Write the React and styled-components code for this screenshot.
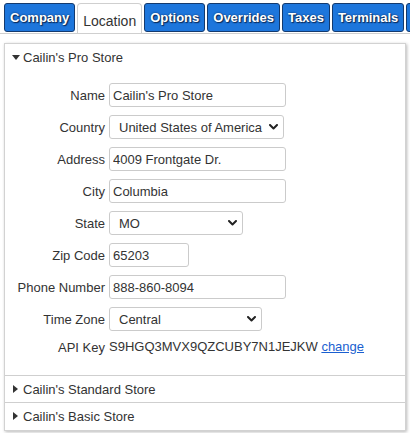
import React from "react";
import styled, { createGlobalStyle } from "styled-components";

const Global = createGlobalStyle`
  html, body { margin: 0; padding: 0; background: #fff; }
  body { font-family: "Liberation Sans", Arial, sans-serif; font-size: 13px; color: #333; }
  * { box-sizing: border-box; }
`;

const Page = styled.div`
  width: 410px;
  height: 433px;
  overflow: hidden;
`;

const TabBar = styled.div`
  display: flex;
  align-items: flex-start;
  gap: 2px;
  height: 34px;
  padding: 3px 0 0 4px;
  border-bottom: 1px solid #cfcfcf;
  overflow: hidden;
`;

const BlueTab = styled.div`
  flex-shrink: 0;
  min-width: ${(p) => p.$minW || 0}px;
  height: 29px;
  line-height: 27px;
  padding: 0 5px;
  background: #1d76dc;
  border: 1px solid #143a6e;
  border-radius: 3px;
  color: #fff;
  font-weight: bold;
  font-size: 13px;
  text-shadow: 0 0 2px #0b2a57, 1px 1px 1px #0b2a57;
  white-space: nowrap;
`;

const ActiveTab = styled.div`
  flex-shrink: 0;
  height: 30px;
  padding: 9px 5px 0;
  background: #fff;
  border: 1px solid #cfcfcf;
  border-bottom: none;
  border-radius: 4px 4px 0 0;
  color: #333;
  font-size: 14px;
  line-height: 16px;
  white-space: nowrap;
`;

const Panel = styled.div`
  margin: 9px 4px 0;
  height: 388px;
  border: 1px solid #d2d2d2;
  box-shadow: 1px 1px 3px rgba(0, 0, 0, 0.28);
  background: #fff;
`;

const Section = styled.div`
  border-top: ${(p) => (p.$first ? "none" : "1px solid #cfcfcf")};
`;

const Header = styled.div`
  display: flex;
  align-items: center;
  height: 26px;
  padding-left: 7px;
  color: #333;
  font-size: 13px;
`;

const Caret = styled.span`
  display: flex;
  align-items: center;
  width: 11px;
  height: 26px;
  &::before {
    content: "";
    display: block;
    ${(p) =>
      p.$open
        ? `border-left: 4px solid transparent; border-right: 4px solid transparent; border-top: 5px solid #333; margin-top: 1px;`
        : `border-top: 4px solid transparent; border-bottom: 4px solid transparent; border-left: 5px solid #333; margin-left: 1px;`}
  }
`;

const Form = styled.div`
  display: grid;
  grid-template-columns: 100px auto;
  column-gap: 4px;
  row-gap: 8px;
  align-items: center;
  padding: 13px 0 20px;
`;

const Label = styled.div`
  text-align: right;
  color: #333;
  font-size: 13px;
  white-space: nowrap;
`;

const Input = styled.input`
  width: ${(p) => p.$w}px;
  height: 24px;
  padding: 0 3px;
  border: 1px solid #cbcbcb;
  border-radius: 3px;
  font-family: "Liberation Sans", Arial, sans-serif;
  font-size: 13px;
  color: #333;
  background: #fff;
  outline: none;
`;

const SelectWrap = styled.div`
  position: relative;
  width: ${(p) => p.$w}px;
  height: 24px;
`;

const Select = styled.select`
  appearance: none;
  -webkit-appearance: none;
  width: 100%;
  height: 24px;
  padding: 0 20px 0 9px;
  border: 1px solid #cbcbcb;
  border-radius: 3px;
  font-family: "Liberation Sans", Arial, sans-serif;
  font-size: 13px;
  color: #333;
  background: #fff;
  outline: none;
`;

const Chevron = styled.svg`
  position: absolute;
  right: 6px;
  top: 9px;
  width: 9px;
  height: 6px;
  pointer-events: none;
`;

const Value = styled.div`
  line-height: 16px;
  white-space: nowrap;
  color: #333;
`;

const Link = styled.a`
  color: #1a5fd0;
  text-decoration: underline;
  cursor: pointer;
`;

function Dropdown({ w, value, options }) {
  return (
    <SelectWrap $w={w}>
      <Select defaultValue={value}>
        {options.map((o) => (
          <option key={o}>{o}</option>
        ))}
      </Select>
      <Chevron viewBox="0 0 9 6">
        <polyline points="1,1 4.5,4.5 8,1" fill="none" stroke="#222" strokeWidth="2" strokeLinecap="round" strokeLinejoin="round" />
      </Chevron>
    </SelectWrap>
  );
}

export default function App() {
  return (
    <Page>
      <Global />
      <TabBar>
        <BlueTab>Company</BlueTab>
        <ActiveTab>Location</ActiveTab>
        <BlueTab>Options</BlueTab>
        <BlueTab>Overrides</BlueTab>
        <BlueTab>Taxes</BlueTab>
        <BlueTab>Terminals</BlueTab>
        <BlueTab $minW={40} aria-hidden="true" />
      </TabBar>
      <Panel>
        <Section $first>
          <Header>
            <Caret $open />
            Cailin's Pro Store
          </Header>
          <Form>
            <Label>Name</Label>
            <Input $w={177} defaultValue="Cailin's Pro Store" />
            <Label>Country</Label>
            <Dropdown w={175} value="United States of America" options={["United States of America", "Canada"]} />
            <Label>Address</Label>
            <Input $w={177} defaultValue="4009 Frontgate Dr." />
            <Label>City</Label>
            <Input $w={177} defaultValue="Columbia" />
            <Label>State</Label>
            <Dropdown w={134} value="MO" options={["MO", "KS", "IL"]} />
            <Label>Zip Code</Label>
            <Input $w={80} defaultValue="65203" />
            <Label>Phone Number</Label>
            <Input $w={177} defaultValue="888-860-8094" />
            <Label>Time Zone</Label>
            <Dropdown w={153} value="Central" options={["Eastern", "Central", "Mountain", "Pacific"]} />
            <Label>API Key</Label>
            <Value>
              S9HGQ3MVX9QZCUBY7N1JEJKW <Link>change</Link>
            </Value>
          </Form>
        </Section>
        <Section>
          <Header>
            <Caret />
            Cailin's Standard Store
          </Header>
        </Section>
        <Section>
          <Header>
            <Caret />
            Cailin's Basic Store
          </Header>
        </Section>
      </Panel>
    </Page>
  );
}
